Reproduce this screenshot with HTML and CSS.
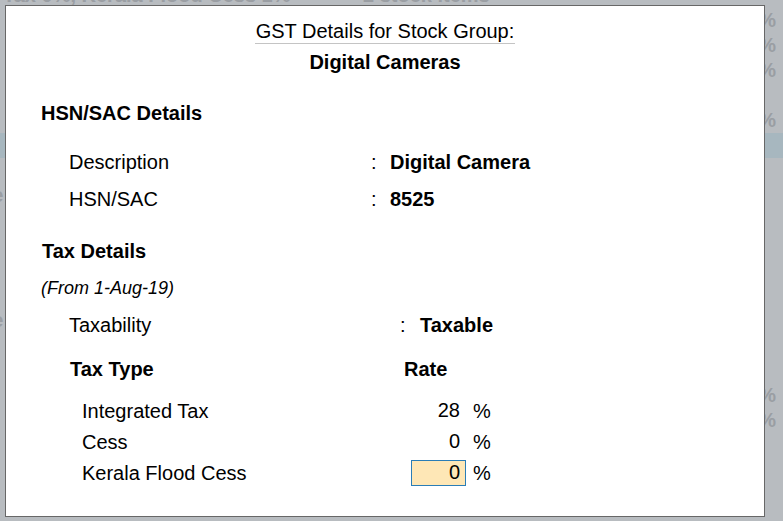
FILE: index.html
```html
<!DOCTYPE html>
<html>
<head>
<meta charset="utf-8">
<title>GST Details for Stock Group</title>
<link rel="stylesheet" href="styles.css">
</head>
<body>
<div class="desk">
  <div class="desk-row"><span class="dl dl-top">Tax 0%, Kerala Flood Cess 1%</span><span class="dm">2 stock items</span><span class="dr"></span></div>
  <div class="desk-row"><span class="dl"></span><span class="dr">0%</span></div>
  <div class="desk-row"><span class="dl"></span><span class="dr">0%</span></div>
  <div class="desk-row"><span class="dl"></span><span class="dr">0%</span></div>
  <div class="desk-row"><span class="dl"></span><span class="dr"></span></div>
  <div class="desk-row"><span class="dl"></span><span class="dr">0%</span></div>
  <div class="desk-row desk-sel"><span class="dl"></span><span class="dr"></span></div>
  <div class="desk-row"><span class="dl"></span><span class="dr"></span></div>
  <div class="desk-row"><span class="dl dl-frag">Rate</span><span class="dr"></span></div>
  <div class="desk-row"><span class="dl"></span><span class="dr"></span></div>
  <div class="desk-row"><span class="dl"></span><span class="dr"></span></div>
  <div class="desk-row"><span class="dl"></span><span class="dr"></span></div>
  <div class="desk-row"><span class="dl"></span><span class="dr"></span></div>
  <div class="desk-row"><span class="dl dl-frag">Rate</span><span class="dr"></span></div>
  <div class="desk-row"><span class="dl"></span><span class="dr"></span></div>
  <div class="desk-row"><span class="dl"></span><span class="dr"></span></div>
  <div class="desk-row"><span class="dl"></span><span class="dr">1%</span></div>
  <div class="desk-row"><span class="dl"></span><span class="dr">0%</span></div>
</div>

<section class="window">
  <header class="head">
    <div class="title">GST Details for Stock Group:</div>
    <div class="subtitle">Digital Cameras</div>
  </header>

  <h2 class="sec sec-hsn">HSN/SAC Details</h2>
  <div class="kv-list">
    <div class="kv"><span class="k">Description</span><span class="colon">:</span><span class="v">Digital Camera</span></div>
    <div class="kv"><span class="k">HSN/SAC</span><span class="colon">:</span><span class="v">8525</span></div>
  </div>

  <h2 class="sec sec-tax">Tax Details</h2>
  <div class="from">(From 1-Aug-19)</div>

  <div class="kv kv-taxability"><span class="k k-wide">Taxability</span><span class="colon colon-wide">:</span><span class="v">Taxable</span></div>

  <div class="rate-head"><span class="rh-type">Tax Type</span><span class="rh-rate">Rate</span></div>

  <div class="rates">
    <div class="rate"><span class="rl">Integrated Tax</span><span class="rv">28</span><span class="pct">%</span></div>
    <div class="rate"><span class="rl">Cess</span><span class="rv">0</span><span class="pct">%</span></div>
    <div class="rate"><span class="rl">Kerala Flood Cess</span><span class="rv rv-input">0</span><span class="pct">%</span></div>
  </div>
</section>
</body>
</html>
```

FILE: styles.css
```css
html, body {
  margin: 0;
  padding: 0;
}

body {
  width: 783px;
  height: 521px;
  overflow: hidden;
  position: relative;
  background: #b8bcc0;
  font-family: "Liberation Sans", Arial, sans-serif;
  color: #000;
}

/* faint desktop content behind the dialog */
.desk {
  margin-top: -17px;
  display: flex;
  flex-direction: column;
  font-size: 20px;
  font-weight: bold;
  color: #9a9ea3;
}

.desk-row {
  height: 25px;
  line-height: 25px;
  display: flex;
  align-items: center;
  white-space: nowrap;
}

.desk-sel {
  background: #a7b7bf;
}

.dl {
  width: 360px;
  flex: none;
}

.dl-top {
  padding-left: 3px;
}

.dl-frag {
  margin-left: -40px;
}

.dm {
  flex: 1;
}

.dr {
  margin-left: auto;
  width: 40px;
  flex: none;
  text-align: right;
  padding-right: 7px;
}

/* dialog window */
.window {
  position: absolute;
  left: 5px;
  top: 5px;
  width: 760px;
  height: 512px;
  box-sizing: border-box;
  border: 1px solid #676767;
  background: #fff;
  font-size: 20px;
  line-height: 22px;
}

.head {
  display: flex;
  flex-direction: column;
  align-items: center;
  padding-top: 14px;
}

.title {
  border-bottom: 1px solid #c4c4c4;
  padding: 0 1px 1px;
}

.subtitle {
  margin-top: 7px;
  font-weight: bold;
}

.sec {
  margin: 0;
  font-size: 20px;
  font-weight: bold;
}

.sec-hsn {
  margin-top: 29px;
  margin-left: 35px;
}

.sec-tax {
  margin-top: 30px;
  margin-left: 36px;
}

.kv-list {
  margin-top: 27px;
  display: flex;
  flex-direction: column;
  gap: 15px;
}

.kv {
  display: flex;
  margin-left: 63px;
  height: 22px;
}

.k {
  width: 302px;
  flex: none;
}

.k-wide {
  width: 331px;
}

.colon {
  width: 19px;
  flex: none;
}

.colon-wide {
  width: 20px;
}

.v {
  font-weight: bold;
}

.from {
  margin-top: 15px;
  margin-left: 35px;
  font-size: 18px;
  font-style: italic;
}

.kv-taxability {
  margin-top: 15px;
}

.rate-head {
  margin-top: 22px;
  margin-left: 64px;
  display: flex;
  font-weight: bold;
}

.rh-type {
  width: 334px;
  flex: none;
}

.rates {
  margin-top: 18px;
  margin-left: 76px;
  display: flex;
  flex-direction: column;
  gap: 5px;
}

.rate {
  display: flex;
  align-items: center;
  height: 26px;
}

.rl {
  width: 329px;
  flex: none;
}

.rv {
  width: 55px;
  height: 26px;
  box-sizing: border-box;
  border: 1px solid transparent;
  padding: 0 5px 2px 0;
  text-align: right;
}

.rv-input {
  background: #fee7b6;
  border-color: #2a7db6;
}

.pct {
  margin-left: 7px;
}
```
